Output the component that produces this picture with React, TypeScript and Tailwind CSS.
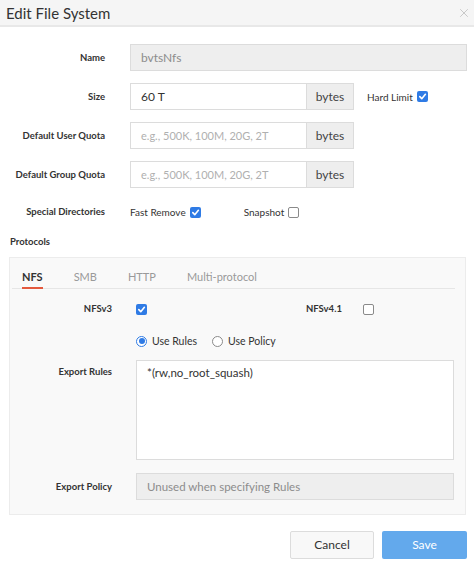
import { X } from "lucide-react"

const font = "font-['Lato','Liberation_Sans',sans-serif]"

function Check({ checked }: { checked: boolean }) {
  if (!checked) {
    return <span className="inline-block w-[11px] h-[11px] rounded-[2px] border border-[#8a8a8a] bg-white" />
  }
  return (
    <span className="inline-flex w-[11px] h-[11px] items-center justify-center rounded-[2px] bg-[#2f7be5]">
      <svg width="9" height="9" viewBox="0 0 10 10">
        <path d="M2 5.2 L4.2 7.4 L8.2 2.6" fill="none" stroke="white" strokeWidth="1.8" strokeLinecap="round" strokeLinejoin="round" />
      </svg>
    </span>
  )
}

function Radio({ checked }: { checked: boolean }) {
  return (
    <span
      className={
        checked
          ? "inline-flex w-[11px] h-[11px] items-center justify-center rounded-full border border-[#2f7be5] bg-white"
          : "inline-flex w-[11px] h-[11px] items-center justify-center rounded-full border border-[#8a8a8a] bg-white"
      }
    >
      {checked && <span className="w-[6px] h-[6px] rounded-full bg-[#2f7be5]" />}
    </span>
  )
}

function Label({ children }: { children: React.ReactNode }) {
  return <div className="w-[105px] shrink-0 text-right text-[9.5px] leading-[14px] font-bold text-[#333]">{children}</div>
}

function BytesInput({ value, placeholder }: { value?: string; placeholder?: string }) {
  return (
    <div className="flex h-[27px] w-[224px] ml-[25px]">
      <div className="flex-1 flex items-center border border-[#dcdcdc] bg-white pl-[10px]">
        {value ? (
          <span className="text-[12px] text-[#333]">{value}</span>
        ) : (
          <span className="text-[11px] text-[#b0b0b0]">{placeholder}</span>
        )}
      </div>
      <div className="w-[47px] flex items-center justify-center border border-l-0 border-[#dcdcdc] bg-[#eeeeee] text-[12px] text-[#444]">
        bytes
      </div>
    </div>
  )
}

export default function App() {
  return (
    <div className={`w-[474px] h-[568px] bg-white ${font} text-[#333] overflow-hidden leading-[14px]`}>
      <div className="h-[27px] flex items-center justify-between pl-[6px] pr-[3px] bg-[#f5f5f5] border-b-2 border-[#e8e8e8]">
        <span className="text-[15px] text-[#333]">Edit File System</span>
        <X size={14} strokeWidth={1.2} className="text-[#b5b5b5]" />
      </div>

      <div className="pt-[17px] flex flex-col gap-[12px]">
        <div className="flex items-center">
          <Label>Name</Label>
          <div className="ml-[25px] h-[27px] w-[337px] flex items-center border border-[#dcdcdc] bg-[#eeeeee] pl-[10px] text-[12px] text-[#8c8c8c]">
            bvtsNfs
          </div>
        </div>

        <div className="flex items-center">
          <Label>Size</Label>
          <BytesInput value="60 T" />
          <span className="ml-[13px] text-[10px]">Hard Limit</span>
          <span className="ml-[4px] flex"><Check checked /></span>
        </div>

        <div className="flex items-center">
          <Label>Default User Quota</Label>
          <BytesInput placeholder="e.g., 500K, 100M, 20G, 2T" />
        </div>

        <div className="flex items-center">
          <Label>Default Group Quota</Label>
          <BytesInput placeholder="e.g., 500K, 100M, 20G, 2T" />
        </div>

        <div className="flex items-center h-[14px] mt-[5px]">
          <Label>Special Directories</Label>
          <span className="ml-[25px] text-[10px]">Fast Remove</span>
          <span className="ml-[4px] flex"><Check checked /></span>
          <span className="ml-[43px] text-[10px]">Snapshot</span>
          <span className="ml-[4px] flex"><Check checked={false} /></span>
        </div>
      </div>

      <div className="mt-[16px] pl-[10px] text-[9.5px] font-bold">Protocols</div>

      <div className="mt-[8px] ml-[9px] mr-[8px] h-[258px] border border-[#ececec] bg-[#f9f9f9] flex flex-col">
        <div className="mt-[12px] ml-[2px] mr-[10px] flex gap-[31px] pl-[10px] border-b border-[#e6e6e6] text-[11px] leading-[14px]">
          <div className="pb-[3px] -mb-px border-b-2 border-[#e4593d] font-bold text-[#333]">NFS</div>
          <div className="text-[#9a9a9a]">SMB</div>
          <div className="text-[#9a9a9a]">HTTP</div>
          <div className="text-[#9a9a9a]">Multi-protocol</div>
        </div>

        <div className="mt-[13px] flex items-center h-[14px]">
          <div className="w-[102px] text-right text-[9.5px] font-bold">NFSv3</div>
          <span className="ml-[24px] flex"><Check checked /></span>
          <div className="ml-[159px] text-[9.5px] font-bold">NFSv4.1</div>
          <span className="ml-[21px] flex"><Check checked={false} /></span>
        </div>

        <div className="mt-[18px] flex items-center h-[14px] pl-[126px] text-[10.5px]">
          <Radio checked />
          <span className="ml-[5px]">Use Rules</span>
          <span className="ml-[15px] flex"><Radio checked={false} /></span>
          <span className="ml-[5px]">Use Policy</span>
        </div>

        <div className="mt-[12px] flex items-start">
          <div className="w-[102px] pt-[5px] text-right text-[9.5px] font-bold">Export Rules</div>
          <div className="ml-[24px] w-[318px] h-[100px] border border-[#dcdcdc] bg-white pl-[10px] pt-[5px] text-[11.5px]">
            *(rw,no_root_squash)
          </div>
        </div>

        <div className="mt-[13px] flex items-center">
          <div className="w-[102px] text-right text-[9.5px] font-bold">Export Policy</div>
          <div className="ml-[24px] w-[318px] h-[27px] flex items-center border border-[#dcdcdc] bg-[#eeeeee] pl-[10px] text-[11.5px] text-[#8c8c8c]">
            Unused when specifying Rules
          </div>
        </div>
      </div>

      <div className="mt-[16px] flex justify-end gap-[8px] pr-[7px]">
        <button className="w-[84px] h-[28px] border border-[#dcdcdc] bg-[#f8f8f8] rounded-[2px] text-[12px] text-[#333]">Cancel</button>
        <button className="w-[85px] h-[28px] rounded-[2px] bg-[#63a9ec] text-[12px] text-white">Save</button>
      </div>
    </div>
  )
}
